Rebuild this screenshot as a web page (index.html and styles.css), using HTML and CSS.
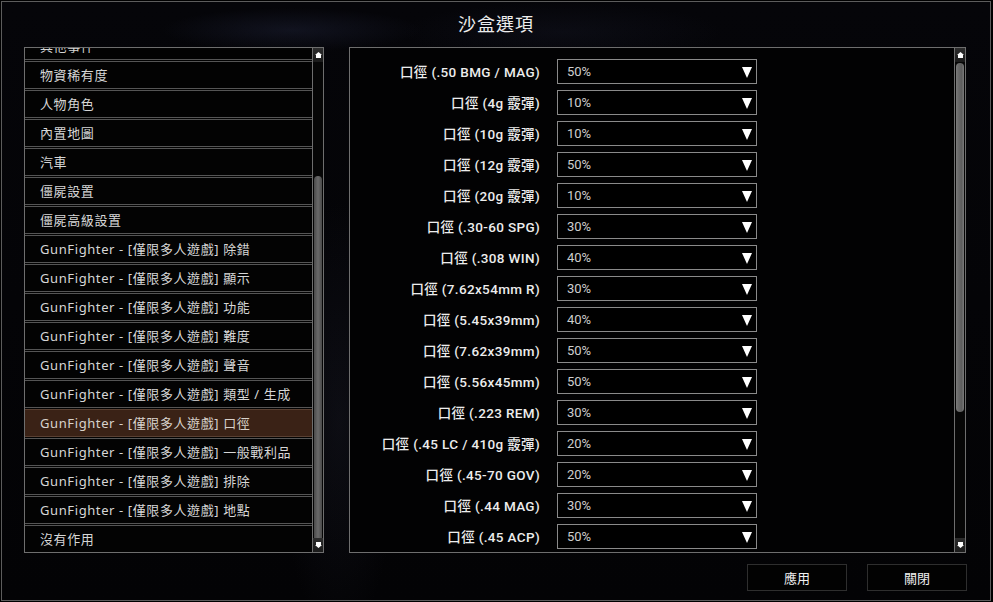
FILE: index.html
```html
<!DOCTYPE html>
<html lang="zh-Hant">
<head>
<meta charset="utf-8">
<title>沙盒選項</title>
<link rel="stylesheet" href="styles.css">
</head>
<body>
<div class="window">
  <h1 class="title">沙盒選項</h1>
  <div class="main">
    <div class="list-box">
      <ul class="list">
        <li class="item first">其他事件</li>
        <li class="item">物資稀有度</li>
        <li class="item">人物角色</li>
        <li class="item">內置地圖</li>
        <li class="item">汽車</li>
        <li class="item">僵屍設置</li>
        <li class="item">僵屍高級設置</li>
        <li class="item">GunFighter - [僅限多人遊戲] 除錯</li>
        <li class="item">GunFighter - [僅限多人遊戲] 顯示</li>
        <li class="item">GunFighter - [僅限多人遊戲] 功能</li>
        <li class="item">GunFighter - [僅限多人遊戲] 難度</li>
        <li class="item">GunFighter - [僅限多人遊戲] 聲音</li>
        <li class="item">GunFighter - [僅限多人遊戲] 類型 / 生成</li>
        <li class="item selected">GunFighter - [僅限多人遊戲] 口徑</li>
        <li class="item">GunFighter - [僅限多人遊戲] 一般戰利品</li>
        <li class="item">GunFighter - [僅限多人遊戲] 排除</li>
        <li class="item">GunFighter - [僅限多人遊戲] 地點</li>
        <li class="item">沒有作用</li>
      </ul>
      <div class="sbar">
        <div class="sb-btn"><svg width="7" height="6" viewBox="0 0 7 6"><path d="M3.5 0 L7 3 L6 3 L6 6 L1 6 L1 3 L0 3 Z" fill="#fff"/></svg></div>
        <div class="sb-track track-left"><div class="sb-thumb"></div></div>
        <div class="sb-btn"><svg width="7" height="6" viewBox="0 0 7 6"><path d="M3.5 6 L7 3 L6 3 L6 0 L1 0 L1 3 L0 3 Z" fill="#fff"/></svg></div>
      </div>
    </div>
    <div class="panel">
      <div class="rows">
        <label class="lbl">口徑 (.50 BMG / MAG)</label><div class="dd"><span>50%</span><svg class="arrow" width="10" height="11" viewBox="0 0 10 11"><path d="M0 0 H10 L5 11 Z" fill="#fff"/></svg></div>
        <label class="lbl">口徑 (4g 霰彈)</label><div class="dd"><span>10%</span><svg class="arrow" width="10" height="11" viewBox="0 0 10 11"><path d="M0 0 H10 L5 11 Z" fill="#fff"/></svg></div>
        <label class="lbl">口徑 (10g 霰彈)</label><div class="dd"><span>10%</span><svg class="arrow" width="10" height="11" viewBox="0 0 10 11"><path d="M0 0 H10 L5 11 Z" fill="#fff"/></svg></div>
        <label class="lbl">口徑 (12g 霰彈)</label><div class="dd"><span>50%</span><svg class="arrow" width="10" height="11" viewBox="0 0 10 11"><path d="M0 0 H10 L5 11 Z" fill="#fff"/></svg></div>
        <label class="lbl">口徑 (20g 霰彈)</label><div class="dd"><span>10%</span><svg class="arrow" width="10" height="11" viewBox="0 0 10 11"><path d="M0 0 H10 L5 11 Z" fill="#fff"/></svg></div>
        <label class="lbl">口徑 (.30-60 SPG)</label><div class="dd"><span>30%</span><svg class="arrow" width="10" height="11" viewBox="0 0 10 11"><path d="M0 0 H10 L5 11 Z" fill="#fff"/></svg></div>
        <label class="lbl">口徑 (.308 WIN)</label><div class="dd"><span>40%</span><svg class="arrow" width="10" height="11" viewBox="0 0 10 11"><path d="M0 0 H10 L5 11 Z" fill="#fff"/></svg></div>
        <label class="lbl">口徑 (7.62x54mm R)</label><div class="dd"><span>30%</span><svg class="arrow" width="10" height="11" viewBox="0 0 10 11"><path d="M0 0 H10 L5 11 Z" fill="#fff"/></svg></div>
        <label class="lbl">口徑 (5.45x39mm)</label><div class="dd"><span>40%</span><svg class="arrow" width="10" height="11" viewBox="0 0 10 11"><path d="M0 0 H10 L5 11 Z" fill="#fff"/></svg></div>
        <label class="lbl">口徑 (7.62x39mm)</label><div class="dd"><span>50%</span><svg class="arrow" width="10" height="11" viewBox="0 0 10 11"><path d="M0 0 H10 L5 11 Z" fill="#fff"/></svg></div>
        <label class="lbl">口徑 (5.56x45mm)</label><div class="dd"><span>50%</span><svg class="arrow" width="10" height="11" viewBox="0 0 10 11"><path d="M0 0 H10 L5 11 Z" fill="#fff"/></svg></div>
        <label class="lbl">口徑 (.223 REM)</label><div class="dd"><span>30%</span><svg class="arrow" width="10" height="11" viewBox="0 0 10 11"><path d="M0 0 H10 L5 11 Z" fill="#fff"/></svg></div>
        <label class="lbl">口徑 (.45 LC / 410g 霰彈)</label><div class="dd"><span>20%</span><svg class="arrow" width="10" height="11" viewBox="0 0 10 11"><path d="M0 0 H10 L5 11 Z" fill="#fff"/></svg></div>
        <label class="lbl">口徑 (.45-70 GOV)</label><div class="dd"><span>20%</span><svg class="arrow" width="10" height="11" viewBox="0 0 10 11"><path d="M0 0 H10 L5 11 Z" fill="#fff"/></svg></div>
        <label class="lbl">口徑 (.44 MAG)</label><div class="dd"><span>30%</span><svg class="arrow" width="10" height="11" viewBox="0 0 10 11"><path d="M0 0 H10 L5 11 Z" fill="#fff"/></svg></div>
        <label class="lbl">口徑 (.45 ACP)</label><div class="dd"><span>50%</span><svg class="arrow" width="10" height="11" viewBox="0 0 10 11"><path d="M0 0 H10 L5 11 Z" fill="#fff"/></svg></div>
      </div>
      <div class="sbar">
        <div class="sb-btn"><svg width="7" height="6" viewBox="0 0 7 6"><path d="M3.5 0 L7 3 L6 3 L6 6 L1 6 L1 3 L0 3 Z" fill="#fff"/></svg></div>
        <div class="sb-track track-right"><div class="sb-thumb thumb-light"></div></div>
        <div class="sb-btn"><svg width="7" height="6" viewBox="0 0 7 6"><path d="M3.5 6 L7 3 L6 3 L6 0 L1 0 L1 3 L0 3 Z" fill="#fff"/></svg></div>
      </div>
    </div>
  </div>
  <div class="buttons">
    <button class="btn">應用</button>
    <button class="btn">關閉</button>
  </div>
</div>
</body>
</html>
```

FILE: styles.css
```css
* { box-sizing: border-box; }

html, body {
  margin: 0;
  padding: 0;
  width: 993px;
  height: 602px;
  overflow: hidden;
  background: #000;
}

body {
  padding: 1px 0 0 1px;
  font-family: "Noto Sans", "Noto Sans CJK TC", sans-serif;
}

.window {
  width: 990px;
  height: 600px;
  border: 1px solid #5c5c5c;
  background:
    radial-gradient(ellipse 130px 22px at 290px 28px, rgba(60, 68, 110, 0.22), transparent),
    radial-gradient(ellipse 160px 30px at 560px 30px, rgba(40, 44, 70, 0.18), transparent),
    radial-gradient(ellipse 60px 220px at 337px 420px, rgba(40, 42, 60, 0.25), transparent),
    linear-gradient(#050509, #030305);
  display: flex;
  flex-direction: column;
}

.title {
  margin: 0;
  height: 45px;
  line-height: 45px;
  text-align: center;
  font-size: 18px;
  font-weight: normal;
  color: #ececec;
  letter-spacing: 1px;
}

.main {
  display: flex;
  gap: 25px;
  height: 506px;
  padding-left: 22px;
}

.list-box {
  width: 300px;
  height: 506px;
  border: 1px solid #6e6e6e;
  display: flex;
  background: #030303;
}

.list {
  list-style: none;
  margin: 0;
  padding: 0;
  flex: 1;
  overflow: hidden;
}

.item {
  height: 28px;
  margin-bottom: 1px;
  border-top: 1px solid #555;
  border-bottom: 1px solid #555;
  padding-left: 15px;
  line-height: 27px;
  font-size: 13px;
  letter-spacing: 0.6px;
  color: #d6d6d6;
  white-space: nowrap;
}

.item.first { margin-top: -16px; }

.item.selected {
  background: #3a2216;
  border-color: #5a4032;
  color: #d8d2cc;
}

.sbar {
  width: 11px;
  border-left: 1px solid #6e6e6e;
  display: flex;
  flex-direction: column;
  background: #060606;
}

.sb-btn {
  height: 14px;
  background: linear-gradient(#2c2c2c, #1a1a1a);
  display: flex;
  align-items: center;
  justify-content: center;
}

.sb-track {
  flex: 1;
  display: flex;
  flex-direction: column;
  padding: 0 1px;
}

.track-left { padding-top: 114px; }
.track-right { padding-top: 1px; padding-bottom: 126px; }

.sb-thumb {
  flex: 1;
  background: linear-gradient(90deg, #4a4a4a, #6a6a6a 50%, #4a4a4a);
  border-radius: 4px 4px 0 0;
}

.thumb-light {
  background: linear-gradient(90deg, #7a7a7a, #6a6a6a 30%, #5e5e5e 70%, #7a7a7a);
  border-radius: 4px;
}

.panel {
  width: 617px;
  height: 506px;
  border: 1px solid #6e6e6e;
  display: flex;
  background: #020203;
}

.rows {
  flex: 1;
  padding-top: 11px;
  display: grid;
  grid-template-columns: 190px 200px;
  grid-auto-rows: 25px;
  column-gap: 17px;
  row-gap: 6px;
  align-content: start;
}

.lbl {
  text-align: right;
  line-height: 26px;
  font-family: Roboto, "Noto Sans CJK TC", sans-serif;
  font-weight: 500;
  font-size: 13.5px;
  color: #ededed;
  white-space: nowrap;
  letter-spacing: 0.35px;
}

.dd {
  border: 1px solid #8a8a8a;
  background: #000;
  display: flex;
  align-items: center;
  justify-content: space-between;
  padding: 0 4px 0 9px;
  font-family: Roboto, sans-serif;
  font-size: 13px;
  color: #cdcdcd;
}

.arrow { display: block; margin-top: 2px; }

.buttons {
  display: flex;
  justify-content: flex-end;
  gap: 20px;
  margin-top: 11px;
  padding-right: 23px;
}

.btn {
  width: 100px;
  height: 27px;
  border: 1px solid #2e2e2e;
  background: #020202;
  color: #f0f0f0;
  font-family: "Noto Sans CJK TC", sans-serif;
  font-size: 13px;
  padding: 0;
}
```
